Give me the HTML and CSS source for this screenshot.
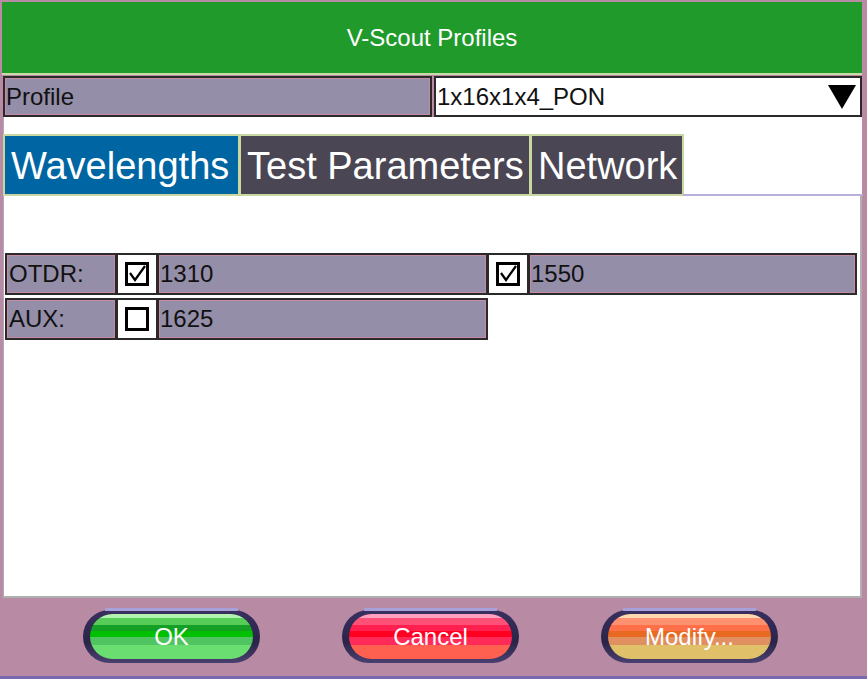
FILE: index.html
```html
<!DOCTYPE html>
<html>
<head>
<meta charset="utf-8">
<link rel="stylesheet" href="styles.css">
</head>
<body>
<div class="screen">
  <div class="header">V-Scout Profiles</div>
  <div class="profile-row">
    <div class="cell label-cell profile-label">Profile</div>
    <div class="cell value-cell profile-value">
      <span>1x16x1x4_PON</span>
      <svg class="arrow" width="28" height="24" viewBox="0 0 28 24"><polygon points="0,0 28,0 14,24" fill="#000"/></svg>
    </div>
  </div>
  <div class="panel">
    <div class="tabs">
      <div class="tab active">Wavelengths</div>
      <div class="tab">Test Parameters</div>
      <div class="tab">Network</div>
      <div class="tab-fill"></div>
    </div>
    <div class="rows">
      <div class="row">
        <div class="cell name">OTDR:</div>
        <div class="cell check">
          <svg width="24" height="24" viewBox="0 0 24 24"><rect x="1.5" y="1.5" width="21" height="21" fill="#fff" stroke="#000" stroke-width="3"/><polyline points="5,11 10,18 20,4" fill="none" stroke="#000" stroke-width="2.2"/></svg>
        </div>
        <div class="cell val">1310</div>
        <div class="cell check">
          <svg width="24" height="24" viewBox="0 0 24 24"><rect x="1.5" y="1.5" width="21" height="21" fill="#fff" stroke="#000" stroke-width="3"/><polyline points="5,11 10,18 20,4" fill="none" stroke="#000" stroke-width="2.2"/></svg>
        </div>
        <div class="cell val wide">1550</div>
      </div>
      <div class="row">
        <div class="cell name">AUX:</div>
        <div class="cell check">
          <svg width="24" height="24" viewBox="0 0 24 24"><rect x="1.5" y="1.5" width="21" height="21" fill="#fff" stroke="#000" stroke-width="3"/></svg>
        </div>
        <div class="cell val">1625</div>
      </div>
    </div>
  </div>
  <div class="footer">
    <div class="btn"><div class="pill green">OK</div></div>
    <div class="btn"><div class="pill red">Cancel</div></div>
    <div class="btn"><div class="pill orange">Modify...</div></div>
  </div>
  <div class="bottom-strip"></div>
</div>
</body>
</html>
```
FILE: styles.css
```css
html, body {
  margin: 0;
  padding: 0;
}
body {
  background: #b98aa4;
  font-family: "Liberation Sans", Arial, sans-serif;
  width: 867px;
  height: 679px;
  overflow: hidden;
}
.screen {
  width: 867px;
  height: 679px;
  display: flex;
  flex-direction: column;
}
.header {
  margin: 2px 0 0 2px;
  width: 860px;
  height: 71px;
  background: #1f9a2b;
  border-bottom: 2px solid #c8dca8;
  color: #fff;
  font-size: 24px;
  display: flex;
  align-items: center;
  justify-content: center;
  box-sizing: content-box;
}
.profile-row {
  margin: 1px 0 0 3px;
  width: 859px;
  height: 41px;
  display: flex;
  gap: 2px;
}
.cell {
  box-sizing: border-box;
  border: 2px solid #2a2a2a;
  box-shadow: inset 0 0 0 1px #c48aa6;
  background: #948ea8;
  color: #111;
  font-size: 24px;
  display: flex;
  align-items: center;
  padding-left: 1px;
}
.profile-label {
  width: 429px;
}
.profile-value {
  flex: 1;
  background: #fff;
  box-shadow: none;
  justify-content: space-between;
  padding-right: 4px;
}
.arrow {
  display: block;
}
.panel {
  margin-left: 3px;
  width: 859px;
  height: 481px;
  box-sizing: border-box;
  background: #fff;
  border-left: 1px solid #b0aab8;
  border-bottom: 2px solid #b0b0b0;
  padding-top: 17px;
  display: flex;
  flex-direction: column;
}
.tabs {
  display: flex;
  height: 62px;
  margin-left: -1px;
}
.tab {
  box-sizing: border-box;
  height: 62px;
  border: 2px solid #c8d8a0;
  background: #4a4654;
  color: #fff;
  font-size: 38px;
  display: flex;
  align-items: center;
  padding: 2px 4px 0 6px;
  margin-right: -1px;
  white-space: nowrap;
}
.tab.active {
  background: #0065a3;
  width: 237px;
}
.tab:nth-child(2) {
  width: 292px;
}
.tab:nth-child(3) {
  width: 154px;
}
.tab-fill {
  flex: 1;
  border-bottom: 2px solid #b8b0d8;
  height: 62px;
  box-sizing: border-box;
  margin-right: -1px;
}
.rows {
  flex: 1;
  border-right: 2px solid #b0b0b0;
  padding: 57px 0 0 1px;
  display: flex;
  flex-direction: column;
  gap: 3px;
}
.row {
  display: flex;
  height: 42px;
}
.name {
  width: 112px;
  padding-left: 2px;
}
.check {
  width: 42px;
  background: #fff;
  box-shadow: none;
  justify-content: center;
  padding-left: 0;
  margin-left: -1px;
}
.check svg {
  display: block;
}
.val {
  width: 331px;
  margin-left: -1px;
}
.val.wide {
  width: 329px;
}
.footer {
  flex: 1;
  display: flex;
  gap: 82px;
  padding: 12px 0 0 83px;
}
.btn {
  position: relative;
  width: 177px;
  height: 53px;
  border-radius: 27px;
  background: linear-gradient(#3a3060, #2a2448 60%, #4a4070);
  box-sizing: border-box;
  padding: 4px 7px;
}
.btn::before {
  content: "";
  position: absolute;
  left: 22px;
  right: 22px;
  top: -2px;
  height: 3px;
  background: #a8a0d8;
}
.pill {
  height: 100%;
  border-radius: 23px;
  color: #fff;
  font-size: 24px;
  display: flex;
  align-items: center;
  justify-content: center;
}
.green {
  background: linear-gradient(#b0f4b0 0%, #b0f4b0 10%, #58cc58 10%, #58cc58 24%, #14a024 24%, #14a024 38%, #00c000 38%, #00c000 52%, #50c460 52%, #50c460 68%, #6ade70 68%, #6ade70 100%);
}
.red {
  background: linear-gradient(#ffa0c0 0%, #ffa0c0 10%, #ff5078 10%, #ff5078 24%, #ff2050 24%, #ff2050 38%, #ff0020 38%, #ff0020 52%, #ff2a58 52%, #ff2a58 68%, #ff6050 68%, #ff6050 100%);
}
.orange {
  background: linear-gradient(#ffd8b0 0%, #ffd8b0 10%, #ff9070 10%, #ff9070 24%, #ff7048 24%, #ff7048 38%, #e86a20 38%, #e86a20 52%, #e09060 52%, #e09060 68%, #e0c068 68%, #e0c068 100%);
}
.bottom-strip {
  height: 3px;
  background: #7a68b0;
}
```
